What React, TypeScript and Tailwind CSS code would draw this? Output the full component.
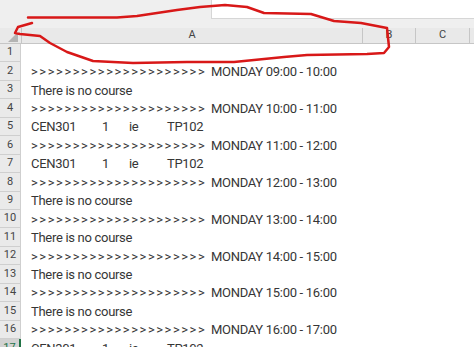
const arrows = ">>>>>>>>>>>>>>>>>>>>>";

type Row =
  | { kind: "blank" }
  | { kind: "slot"; time: string }
  | { kind: "none" }
  | { kind: "course" };

const rows: Row[] = [
  { kind: "blank" },
  { kind: "slot", time: "09:00 - 10:00" },
  { kind: "none" },
  { kind: "slot", time: "10:00 - 11:00" },
  { kind: "course" },
  { kind: "slot", time: "11:00 - 12:00" },
  { kind: "course" },
  { kind: "slot", time: "12:00 - 13:00" },
  { kind: "none" },
  { kind: "slot", time: "13:00 - 14:00" },
  { kind: "none" },
  { kind: "slot", time: "14:00 - 15:00" },
  { kind: "none" },
  { kind: "slot", time: "15:00 - 16:00" },
  { kind: "none" },
  { kind: "slot", time: "16:00 - 17:00" },
  { kind: "course" },
];

function Cell({ row }: { row: Row }) {
  if (row.kind === "slot")
    return (
      <div className="flex whitespace-pre">
        <span className="w-[180px] tracking-[1.55px]">{arrows}</span>
        <span>MONDAY {row.time}</span>
      </div>
    );
  if (row.kind === "none") return <span>There is no course</span>;
  if (row.kind === "course")
    return (
      <div className="flex">
        <span className="w-[71px]">CEN301</span>
        <span className="w-[27px]">1</span>
        <span className="w-[38px]">ie</span>
        <span>TP102</span>
      </div>
    );
  return null;
}

export default function App() {
  return (
    <div className="relative w-[474px] h-[347px] overflow-hidden bg-white font-['Roboto',sans-serif] text-[#363636]">
      {/* formula bar strip */}
      <div className="h-[28px] bg-[#efefef] flex">
        <div className="w-[211px]" />
        <div className="flex-1 h-[19px] bg-white border-l border-b border-[#d6d6d6]" />
      </div>

      {/* column headers */}
      <div className="h-[16px] flex bg-[#e9e9e9] border-b border-[#c6c6c6] text-[11px] text-[#444]">
        <div className="w-[21px] relative">
          <div className="absolute right-[3px] bottom-[1px] w-0 h-0 border-l-[10px] border-l-transparent border-b-[10px] border-b-[#b4b4b4]" />
        </div>
        <div className="w-[341px] flex items-center justify-center border-l border-[#c6c6c6]">A</div>
        <div className="w-[53px] flex items-center justify-center border-l border-[#c6c6c6]">B</div>
        <div className="w-[54px] flex items-center justify-center border-l border-[#c6c6c6]">C</div>
        <div className="flex-1 border-l border-[#c6c6c6]" />
      </div>

      {/* sheet rows */}
      <div className="flex flex-col">
        {rows.map((row, i) => {
          const active = i === rows.length - 1;
          return (
            <div key={i} className="h-[18.45px] flex shrink-0">
              <div
                className={
                  active
                    ? "w-[21px] shrink-0 bg-[#d2d2d2] border-r-2 border-[#217346] flex items-center justify-center text-[11px] text-[#217346]"
                    : "w-[21px] shrink-0 bg-[#eaeaea] border-r border-b border-[#cfcfcf] flex items-center justify-center text-[11px] text-[#444]"
                }
              >
                {i + 1}
              </div>
              <div className="flex-1 pl-[10px] flex items-center text-[13px] tracking-[-0.3px] leading-none">
                <Cell row={row} />
              </div>
            </div>
          );
        })}
      </div>

      {/* red hand-drawn marker */}
      <svg className="absolute left-0 top-0 pointer-events-none" width="474" height="347">
        <path
          d="M28 17.5 L117 17.5 L137 16 L157 13 L177 10 L200 7 L225 5 L247 7 L264 13 L311 14 L334 21 L361 23 L387 28 L389 47 L384 53 L367 54 L307 55 L284 57 L234 62 L187 62 L133 63 L93 61 L67 52 L50 43 L40 36 L20 34 L15 33 L18 27 L32 23"
          fill="none"
          stroke="#d81818"
          strokeWidth="2.5"
          strokeLinejoin="round"
          strokeLinecap="round"
        />
      </svg>
    </div>
  );
}
